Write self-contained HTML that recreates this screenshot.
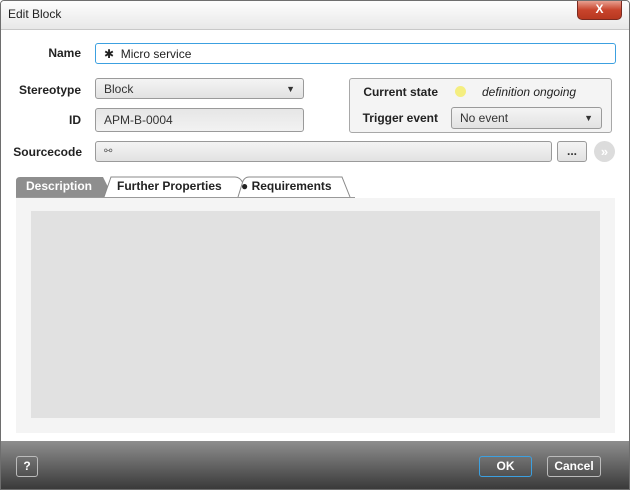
<!DOCTYPE html>
<html><head><style>
body{margin:0;width:630px;height:490px;font-family:"Liberation Sans",sans-serif;font-size:12px;background:#fff;overflow:hidden}
.win{position:absolute;left:0;top:0;width:628px;height:488px;border:1px solid #6e6e6e;border-radius:4px 4px 0 0;background:#fff;overflow:hidden}
.title{position:absolute;left:0;top:0;width:628px;height:28px;background:linear-gradient(#fdfdfd,#e8e8e8);border-bottom:1px solid #c8c8c8}
.title span{position:absolute;left:7px;top:6px;font-size:12px;color:#222}
.close{position:absolute;left:576px;top:0;width:43px;height:18px;border:1px solid #7a2a20;border-top:none;border-radius:0 0 5px 5px;background:linear-gradient(#e8a090,#c8442c 50%,#b83820);color:#fff;font-weight:bold;text-align:center;font-size:12px;line-height:17px}
.lbl{position:absolute;font-weight:bold;color:#222;text-align:right;font-size:12px}
.box{position:absolute;border:1px solid #9a9a9a;border-radius:3px;background:linear-gradient(#f4f4f4,#e2e2e2);box-sizing:border-box;padding-left:8px;line-height:20px;color:#333}
.dd:after{content:"▼";position:absolute;right:8px;top:0;font-size:9px;color:#333}
.tab{position:absolute;top:175px;height:21px;font-weight:bold;font-size:12px;line-height:21px;box-sizing:border-box;padding-left:10px}
.btn{position:absolute;top:455px;height:21px;border:1px solid #bbb;border-radius:3px;color:#fff;font-weight:bold;text-align:center;line-height:19px;box-sizing:border-box}
</style></head><body>
<div class="win">
<div class="title"><span>Edit Block</span><div class="close">X</div></div>
<div class="lbl" style="left:20px;width:60px;top:45px">Name</div>
<div class="box" style="left:94px;top:42px;width:521px;height:21px;border:1px solid #3ca0e0;background:#fff;color:#222">✱&nbsp; Micro service</div>
<div class="lbl" style="left:10px;width:70px;top:82px">Stereotype</div>
<div class="box dd" style="left:94px;top:77px;width:209px;height:21px">Block</div>
<div class="lbl" style="left:20px;width:60px;top:112px">ID</div>
<div class="box" style="left:94px;top:107px;width:209px;height:24px;line-height:23px;background:linear-gradient(#e6e6e6,#f2f2f2)">APM-B-0004</div>
<div style="position:absolute;left:348px;top:77px;width:263px;height:55px;border:1px solid #a8a8a8;border-radius:3px;background:#f4f4f4;box-sizing:border-box"></div>
<div class="lbl" style="left:350px;width:87px;top:84px">Current state</div>
<div style="position:absolute;left:454px;top:85px;width:11px;height:11px;border-radius:50%;background:#f4ee80"></div>
<div style="position:absolute;left:481px;top:84px;font-style:italic;color:#222">definition ongoing</div>
<div class="lbl" style="left:350px;width:87px;top:110px">Trigger event</div>
<div class="box dd" style="left:450px;top:106px;width:151px;height:22px;line-height:21px">No event</div>
<div class="lbl" style="left:5px;width:76px;top:144px">Sourcecode</div>
<div class="box" style="left:94px;top:140px;width:457px;height:21px;font-size:10px;color:#666">⚯</div>
<div class="box" style="left:556px;top:140px;width:30px;height:21px;padding:0;text-align:center;font-weight:bold;line-height:18px">...</div>
<div style="position:absolute;left:593px;top:140px;width:21px;height:21px;border-radius:50%;background:#dcdcdc;color:#fff;font-weight:bold;text-align:center;line-height:21px;font-size:13px">»</div>
<svg style="position:absolute;left:14px;top:174px" width="340" height="24">
<path d="M1 22 V6 Q1 2 5 2 H88 L98 22 Z" fill="#8e8e8e"/>
<path d="M89 22 L96 2 H220 Q225 2 228 8 L234 22" fill="#fff" stroke="#888"/>
<path d="M223 22 L228 6 Q230 2 234 2 H327 L335 22" fill="#fff" stroke="#888"/>
<line x1="1" y1="22.5" x2="600" y2="22.5" stroke="#999"/>
</svg>
<div class="tab" style="left:15px;color:#fff">Description</div>
<div class="tab" style="left:106px;color:#222">Further Properties</div>
<div class="tab" style="left:230px;color:#222">● Requirements</div>
<div style="position:absolute;left:15px;top:197px;width:599px;height:235px;background:#f4f4f4"></div>
<div style="position:absolute;left:30px;top:210px;width:569px;height:207px;background:#e1e1e1"></div>
<div style="position:absolute;left:0;top:440px;width:628px;height:48px;background:linear-gradient(#8e8e8e,#3a3a3a)"></div>
<div class="btn" style="left:15px;width:22px">?</div>
<div class="btn" style="left:478px;width:53px;border-color:#3ca0e0">OK</div>
<div class="btn" style="left:546px;width:54px">Cancel</div>
</div>
</body></html>
